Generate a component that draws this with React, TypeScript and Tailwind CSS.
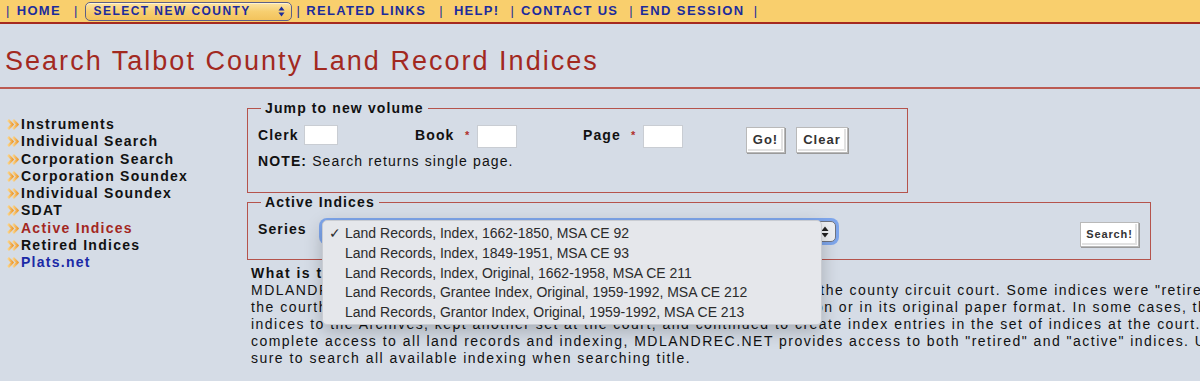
import React from 'react';

const navBlue = 'text-[#1c2c9c]';

function Chevron() {
  return (
    <svg width="12" height="11" viewBox="0 0 12 11" className="mr-[2px] shrink-0">
      <defs>
        <linearGradient id="chev" x1="0" x2="1" y1="0" y2="0">
          <stop offset="0" stopColor="#fbd58a" />
          <stop offset="1" stopColor="#efa13a" />
        </linearGradient>
      </defs>
      <path d="M1 1 L5.5 5.5 L1 10" stroke="url(#chev)" strokeWidth="2.5" fill="none" />
      <path d="M6 1 L10.5 5.5 L6 10" stroke="url(#chev)" strokeWidth="2.5" fill="none" />
    </svg>
  );
}

const menu = [
  { label: 'Instruments', color: 'text-[#111]' },
  { label: 'Individual Search', color: 'text-[#111]' },
  { label: 'Corporation Search', color: 'text-[#111]' },
  { label: 'Corporation Soundex', color: 'text-[#111]' },
  { label: 'Individual Soundex', color: 'text-[#111]' },
  { label: 'SDAT', color: 'text-[#111]' },
  { label: 'Active Indices', color: 'text-[#a3271f]' },
  { label: 'Retired Indices', color: 'text-[#111]' },
  { label: 'Plats.net', color: 'text-[#1b2aa6]' },
];

const series = [
  'Land Records, Index, 1662-1850, MSA CE 92',
  'Land Records, Index, 1849-1951, MSA CE 93',
  'Land Records, Index, Original, 1662-1958, MSA CE 211',
  'Land Records, Grantee Index, Original, 1959-1992, MSA CE 212',
  'Land Records, Grantor Index, Original, 1959-1992, MSA CE 213',
];

function Btn({ children, className = '' }: { children: React.ReactNode; className?: string }) {
  return (
    <button
      className={`bg-white border border-[#b9b9b9] shadow-[inset_0_0_0_1px_#fff,inset_-1px_-1px_0_2px_#e2e2e2,1px_1px_0_#9a9a9a] font-bold text-[#333] tracking-[0.08em] ${className}`}
    >
      {children}
    </button>
  );
}

export default function App() {
  return (
    <div className="min-h-screen w-full overflow-hidden bg-[#d5dce6] font-['Liberation_Sans',Arial,sans-serif] text-[#111]">
      {/* top nav */}
      <div className="h-[24px] bg-[#f9cf6d] border-b-2 border-[#a52a20] flex items-center pl-[6px] text-[13px] font-bold tracking-[0.1em] whitespace-nowrap">
        <span className={`${navBlue} pr-[6px] font-normal`}>|</span>
        <span className={navBlue}>HOME</span>
        <span className={`${navBlue} pl-[13px] pr-[6px] font-normal`}>|</span>
        <div className="w-[207px] h-[19px] rounded-[5px] border border-[#5d5f86] bg-gradient-to-b from-[#fde4a3] via-[#f7cf70] to-[#f3c35c] shadow-[inset_0_1px_0_#fff3cf] flex items-center pl-[8px] pr-[6px]">
          <span className={`${navBlue} text-[12px] tracking-[0.12em]`}>SELECT NEW COUNTY</span>
          <svg width="7" height="11" viewBox="0 0 7 11" className="ml-auto">
            <path d="M3.5 0.5 L6.5 4.5 L0.5 4.5 Z" fill="#1c2c9c" />
            <path d="M3.5 10.5 L6.5 6.5 L0.5 6.5 Z" fill="#1c2c9c" />
          </svg>
        </div>
        <span className={`${navBlue} pl-[5px] pr-[5px] font-normal`}>|</span>
        <span className={navBlue}>RELATED LINKS</span>
        <span className={`${navBlue} pl-[13px] pr-[10px] font-normal`}>|</span>
        <span className={navBlue}>HELP!</span>
        <span className={`${navBlue} pl-[11px] pr-[6px] font-normal`}>|</span>
        <span className={navBlue}>CONTACT US</span>
        <span className={`${navBlue} pl-[11px] pr-[6px] font-normal`}>|</span>
        <span className={`${navBlue} tracking-[0.11em]`}>END SESSION</span>
        <span className={`${navBlue} pl-[9px] font-normal`}>|</span>
      </div>

      {/* title */}
      <div className="pt-[22px] pb-[11px] border-b-2 border-[#bb5a52]">
        <h1 className="pl-[5px] text-[27px] leading-[30px] tracking-[0.075em] text-[#a2291f]">
          Search Talbot County Land Record Indices
        </h1>
      </div>

      <div className="flex">
        {/* sidebar */}
        <div className="w-[247px] shrink-0 pl-[7px] pt-[27px]">
          {menu.map((m) => (
            <div key={m.label} className="flex items-center h-[17.25px]">
              <Chevron />
              <span className={`text-[14px] font-bold tracking-[0.09em] leading-[17px] ${m.color}`}>{m.label}</span>
            </div>
          ))}
        </div>

        {/* content */}
        <div className="pt-[11px] flex-1 min-w-0">
          <fieldset className="w-[661px] border border-[#b5534c] px-[10px] pb-[23px]">
            <legend className="ml-[3px] px-[4px] text-[14px] leading-[16px] font-bold tracking-[0.08em]">
              Jump to new volume
            </legend>
            <div className="flex items-start mt-[9px] h-[28px] text-[14px] font-bold tracking-[0.08em]">
              <div className="w-[157px] flex items-start">
                <span className="leading-[20px] w-[46px]">Clerk</span>
                <div className="w-[34px] h-[20px] bg-white border border-[#c9cdd3]" />
              </div>
              <div className="w-[168px] flex items-start">
                <span className="leading-[20px] w-[50px]">Book</span>
                <span className="leading-[20px] text-[#b0302a] text-[11px] w-[12px]">*</span>
                <div className="w-[40px] h-[23px] bg-white border border-[#c9cdd3]" />
              </div>
              <div className="w-[163px] flex items-start">
                <span className="leading-[20px] w-[48px]">Page</span>
                <span className="leading-[20px] text-[#b0302a] text-[11px] w-[12px]">*</span>
                <div className="w-[40px] h-[23px] bg-white border border-[#c9cdd3]" />
              </div>
              <Btn className="mt-[2px] w-[39px] h-[26px] text-[13px]">Go!</Btn>
              <Btn className="mt-[2px] ml-[11px] w-[52px] h-[26px] text-[13px]">Clear</Btn>
            </div>
            <div className="text-[14px] leading-[16px] tracking-[0.08em]">
              <span className="font-bold">NOTE:</span> Search returns single page.
            </div>
          </fieldset>

          <fieldset className="mt-[1px] w-[904px] border border-[#b5534c] pl-[10px] pr-[11px] pb-[11px]">
            <legend className="ml-[3px] px-[4px] text-[14px] leading-[16px] font-bold tracking-[0.08em]">
              Active Indices
            </legend>
            <div className="flex items-start mt-[8px] h-[30px]">
              <span className="mt-[3px] leading-[16px] text-[14px] font-bold tracking-[0.08em] w-[64px]">Series</span>
              <div className="relative z-10 mt-[3px] w-[514px] h-[21px] rounded-[5px] border border-[#6f7480] bg-[#eef0f3] ring-[3px] ring-[#7ea6ec]">
                <svg width="8" height="12" viewBox="0 0 8 12" className="absolute right-[6px] top-[4px]">
                  <path d="M4 0.5 L7.5 5 L0.5 5 Z" fill="#222" />
                  <path d="M4 11.5 L7.5 7 L0.5 7 Z" fill="#222" />
                </svg>
                <div className="absolute left-[-1px] top-[-2px] w-[500px] h-[105px] rounded-[5px] bg-[#e5e7eb] border border-[#c9ccd2] shadow-[0_6px_18px_rgba(0,0,0,0.22)] pt-[3px]">
                  {series.map((s, i) => (
                    <div key={s} className="flex items-center h-[19.7px] text-[14px] text-[#2b2b2b]">
                      <span className="w-[22px] pl-[6px]">{i === 0 ? '✓' : ''}</span>
                      <span>{s}</span>
                    </div>
                  ))}
                </div>
              </div>
              <Btn className="ml-auto mt-[4px] w-[59px] h-[25px] text-[11px]">Search!</Btn>
            </div>
          </fieldset>

          <div className="mt-[5px] pl-[4px] text-[14px] leading-[17px] tracking-[0.105em] whitespace-nowrap">
            <div className="font-bold">What is the difference between "retired" and "active" indices?</div>
            <div>
              MDLANDREC.NET offers access to indices housed by the Archives and by the county circuit court. Some indices were "retired" by
            </div>
            <div>
              the courthouse and transferred to the Archives, viewable as a digital version or in its original paper format. In some cases, the court
            </div>
            <div>
              indices to the Archives, kept another set at the court, and continued to create index entries in the set of indices at the court. In
            </div>
            <div>
              complete access to all land records and indexing, MDLANDREC.NET provides access to both "retired" and "active" indices. Users should be
            </div>
            <div>sure to search all available indexing when searching title.</div>
          </div>
        </div>
      </div>
    </div>
  );
}
